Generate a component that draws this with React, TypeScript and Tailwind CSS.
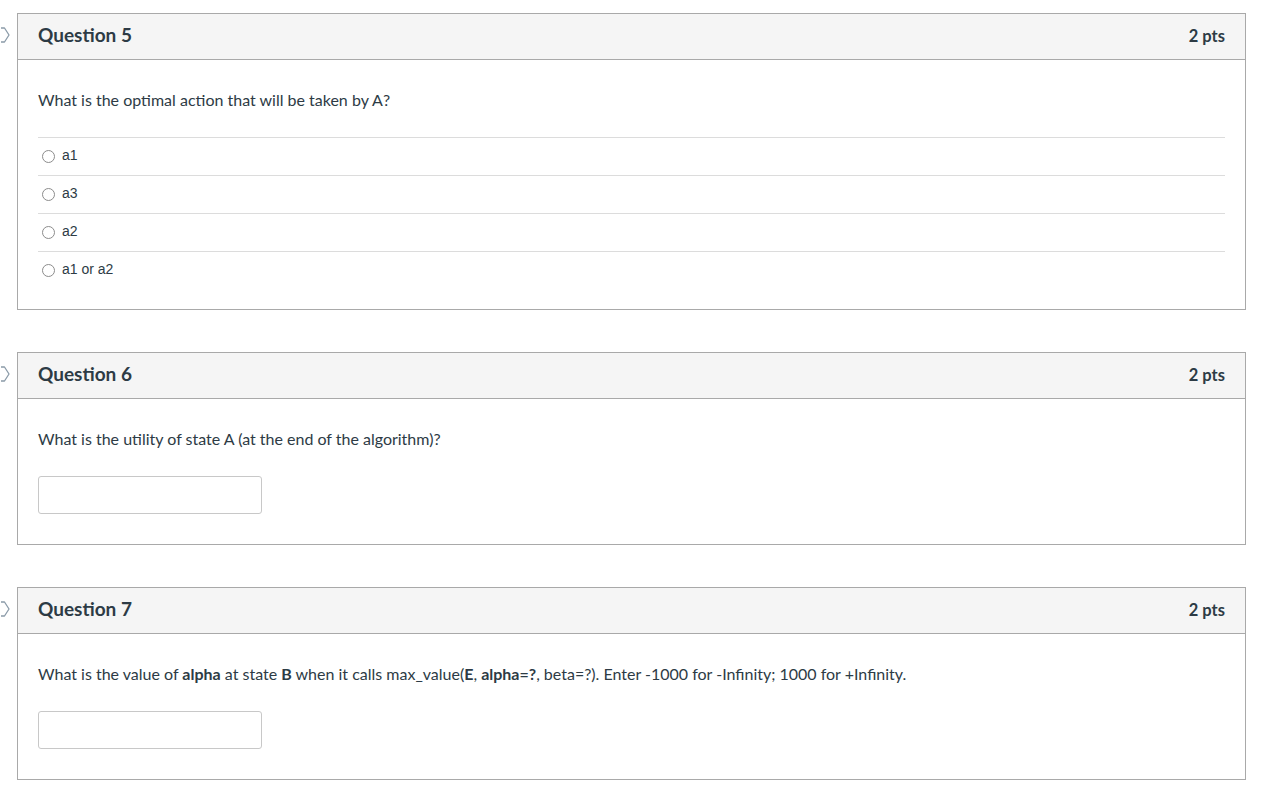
import React from 'react';

const Marker: React.FC = () => (
  <svg className="absolute left-[-17px] top-[12px]" width="9" height="18" viewBox="0 0 9 18" fill="none">
    <path d="M0 2 L3.5 2 L8 9 L3.5 16 L0 16" stroke="#8a9aa8" strokeWidth="1.3" strokeLinejoin="round" />
  </svg>
);

const Card: React.FC<{ title: string; children: React.ReactNode }> = ({ title, children }) => (
  <div className="relative border border-[#a9a9a9] bg-white">
    <Marker />
    <div className="flex h-[46px] items-center justify-between border-b border-[#a9a9a9] bg-[#f5f5f5] px-[20px]">
      <h2 className="-mt-[3px] text-[19px] font-bold text-[#2d3b45]">{title}</h2>
      <span className="text-[16.5px] font-bold text-[#2d3b45]">2 pts</span>
    </div>
    {children}
  </div>
);

const Radio: React.FC<{ label: string }> = ({ label }) => (
  <div className="flex h-[38px] items-center border-t border-[#dcdcdc] pl-[4px]">
    <span className="mr-[7px] h-[13px] w-[13px] rounded-full border border-[#8c8c8c] bg-white" />
    <span className="-mt-[2px] font-['Liberation_Sans',Arial,sans-serif] text-[14px] text-[#2d3b45]">{label}</span>
  </div>
);

const TextBox: React.FC = () => (
  <div className="h-[38px] w-[224px] rounded-[3px] border border-[#c8c8c8] bg-white" />
);

export default function App() {
  return (
    <div className="min-h-[797px] overflow-hidden bg-white pl-[17px] pr-[22px] pt-[13px] font-['Lato','Noto_Sans',sans-serif]">
      <div className="flex flex-col gap-[42px]">
        <Card title="Question 5">
          <div className="px-[20px] pb-[20px] pt-[30px]">
            <p className="text-[16px] leading-[20px] text-[#2d3b45]">What is the optimal action that will be taken by A?</p>
            <div className="mt-[27px]">
              <Radio label="a1" />
              <Radio label="a3" />
              <Radio label="a2" />
              <Radio label="a1 or a2" />
            </div>
          </div>
        </Card>

        <Card title="Question 6">
          <div className="px-[20px] pb-[30px] pt-[30px]">
            <p className="text-[16px] leading-[20px] text-[#2d3b45]">What is the utility of state A (at the end of the algorithm)?</p>
            <div className="mt-[27px]">
              <TextBox />
            </div>
          </div>
        </Card>

        <Card title="Question 7">
          <div className="px-[20px] pb-[30px] pt-[30px]">
            <p className="text-[16px] leading-[20px] text-[#2d3b45]">
              What is the value of <strong>alpha</strong> at state <strong>B</strong> when it calls max_value(<strong>E</strong>, <strong>alpha=?</strong>, beta=?). Enter -1000 for -Infinity; 1000 for +Infinity.
            </p>
            <div className="mt-[27px]">
              <TextBox />
            </div>
          </div>
        </Card>
      </div>
    </div>
  );
}
